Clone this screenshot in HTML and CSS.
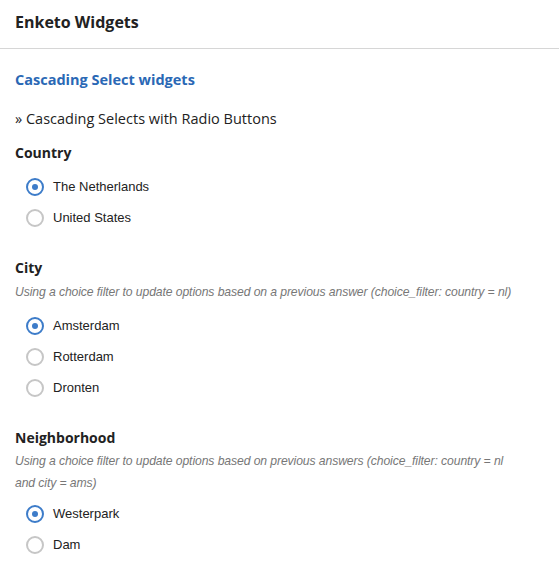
FILE: index.html
```html
<!DOCTYPE html>
<html lang="en">
<head>
<meta charset="utf-8">
<title>Enketo Widgets</title>
<link rel="stylesheet" href="styles.css">
</head>
<body>
<header class="topbar"><h1 class="title">Enketo Widgets</h1></header>
<main class="form">
  <h2 class="section-title">Cascading Select widgets</h2>
  <h3 class="group-title">» Cascading Selects with Radio Buttons</h3>

  <fieldset class="question q-first">
    <legend class="label">Country</legend>
    <div class="options">
      <label class="option"><span class="radio checked"></span><span class="opt-text">The Netherlands</span></label>
      <label class="option"><span class="radio"></span><span class="opt-text">United States</span></label>
    </div>
  </fieldset>

  <fieldset class="question">
    <legend class="label">City</legend>
    <p class="hint">Using a choice filter to update options based on a previous answer (choice_filter: country = nl)</p>
    <div class="options">
      <label class="option"><span class="radio checked"></span><span class="opt-text">Amsterdam</span></label>
      <label class="option"><span class="radio"></span><span class="opt-text">Rotterdam</span></label>
      <label class="option"><span class="radio"></span><span class="opt-text">Dronten</span></label>
    </div>
  </fieldset>

  <fieldset class="question">
    <legend class="label">Neighborhood</legend>
    <p class="hint hint-wrapped">Using a choice filter to update options based on previous answers (choice_filter: country = nl<br>and city = ams)</p>
    <div class="options">
      <label class="option"><span class="radio checked"></span><span class="opt-text">Westerpark</span></label>
      <label class="option"><span class="radio"></span><span class="opt-text">Dam</span></label>
    </div>
  </fieldset>
</main>
</body>
</html>
```
FILE: styles.css
```css
* { box-sizing: border-box; }
html, body { margin: 0; padding: 0; background: #fff; }
body { font-family: "Open Sans", "Liberation Sans", Arial, sans-serif; color: #222; }

.topbar {
  height: 49px;
  border-bottom: 1px solid #d6d6d6;
  padding: 10px 15px 0;
}
.title {
  margin: 0;
  font-size: 16px;
  line-height: 24px;
  font-weight: 700;
  color: #222;
}

.form { padding: 0 15px; }

.section-title {
  margin: 21px 0 0;
  font-size: 14.5px;
  line-height: 20px;
  font-weight: 700;
  color: #2a68b5;
}
.group-title {
  margin: 19px 0 0;
  font-size: 14.5px;
  line-height: 20px;
  font-weight: 400;
  color: #222;
}

.question {
  border: 0;
  margin: 25px 0 0;
  padding: 0;
  display: flex;
  flex-direction: column;
}
.question.q-first { margin-top: 14px; }

.label {
  padding: 0;
  font-size: 14px;
  line-height: 20px;
  font-weight: 700;
  color: #222;
  float: left;
  width: 100%;
}

.hint {
  margin: 3px 0 0;
  font-family: "Liberation Sans", Arial, sans-serif;
  font-style: italic;
  font-size: 12.2px;
  letter-spacing: -0.1px;
  line-height: 22px;
  color: #777;
}
.hint.hint-wrapped { margin-top: 2px; margin-bottom: -3px; }

.options {
  display: flex;
  flex-direction: column;
  margin-top: 8px;
  padding-left: 11px;
}
.hint + .options { margin-top: 7px; }
.option {
  display: flex;
  align-items: center;
  height: 31px;
  gap: 9px;
  font-family: "Liberation Sans", Arial, sans-serif;
  font-size: 13px;
  color: #222;
}
.radio {
  width: 18px;
  height: 18px;
  border-radius: 50%;
  border: 2px solid #c6c6c6;
  flex: none;
  position: relative;
  background: #fff;
}
.radio.checked { border-color: #3d7cc9; }
.radio.checked::after {
  content: "";
  position: absolute;
  left: 50%;
  top: 50%;
  width: 6px;
  height: 6px;
  margin: -3px 0 0 -3px;
  border-radius: 50%;
  background: #3d7cc9;
}
```
